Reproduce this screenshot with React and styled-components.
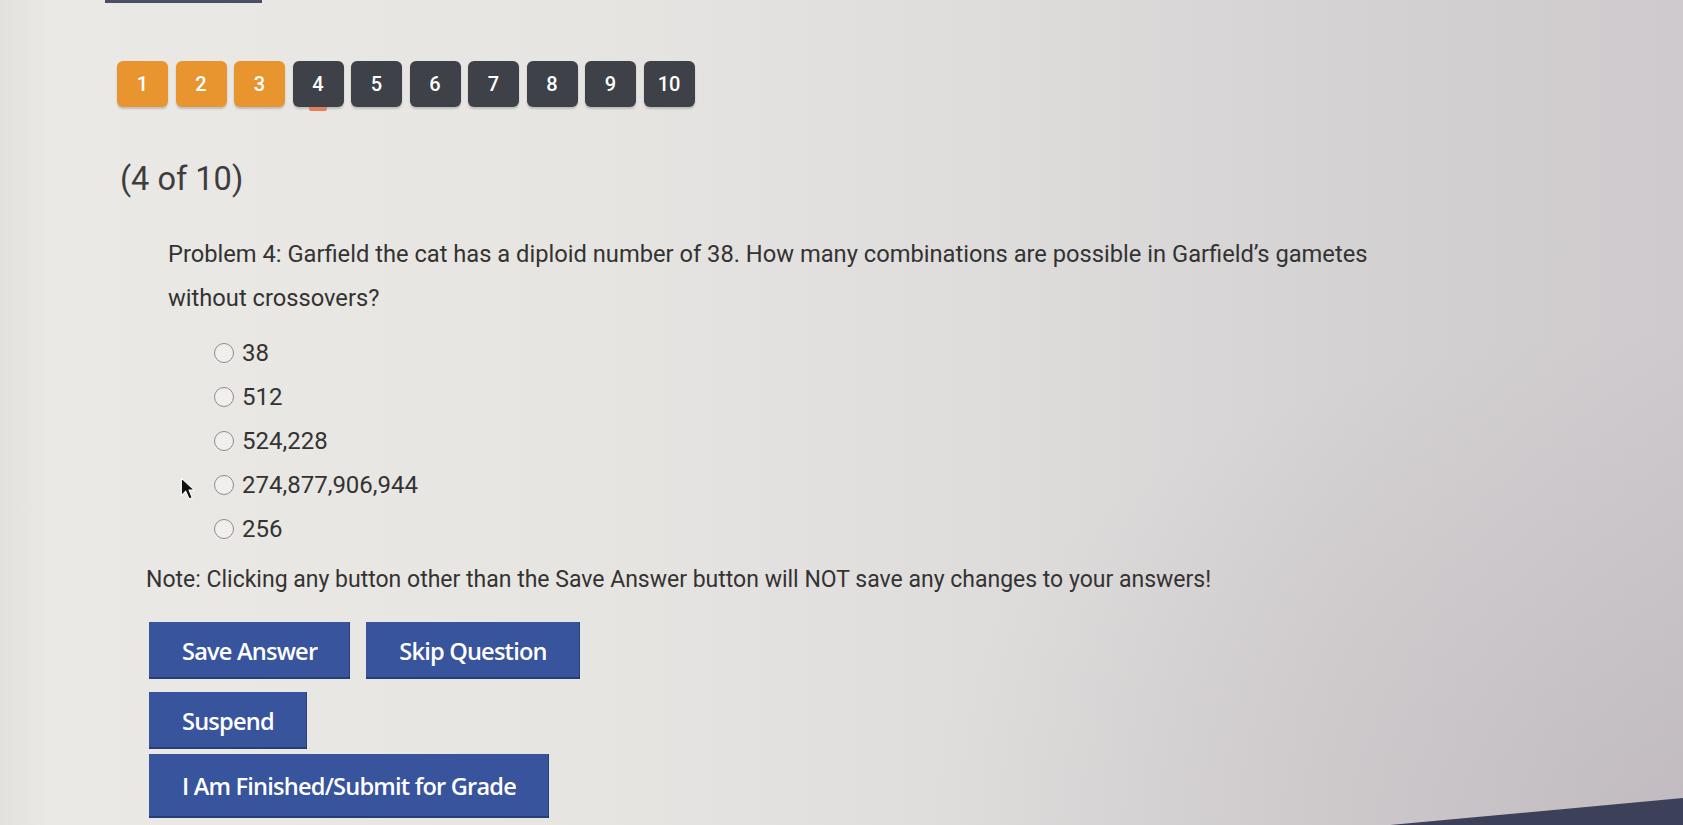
import React from "react";
import styled, { createGlobalStyle } from "styled-components";

const Global = createGlobalStyle`
  html, body { margin: 0; padding: 0; }
  body { font-family: Roboto, "Liberation Sans", Arial, sans-serif; }
`;

const Page = styled.div`
  position: relative;
  width: 100vw;
  height: 825px;
  overflow: hidden;
  box-sizing: border-box;
  background:
    radial-gradient(ellipse 45% 60% at 100% 100%, rgba(170, 160, 168, 0.35), rgba(170, 160, 168, 0) 100%),
    linear-gradient(90deg, #e3e1de 0%, #ebe9e5 3%, #e7e5e2 35%, #dfdddc 58%, #d5d2d3 80%, #cecacd 100%);
  color: #373737;
`;

const TopRule = styled.div`
  margin-left: 105px;
  width: 157px;
  height: 3px;
  background: #4a4f62;
`;

const Nav = styled.nav`
  display: flex;
  gap: 7.5px;
  margin: 58px 0 0 117px;
`;

const NavBox = styled.div`
  position: relative;
  width: 51px;
  height: 46px;
  border-radius: 6px;
  display: flex;
  align-items: center;
  justify-content: center;
  font-family: Roboto, "Liberation Sans", Arial, sans-serif;
  font-weight: 500;
  font-size: 20px;
  color: #ffffff;
  background: ${(p) => (p.$done ? "#e8952f" : "#3e4248")};
  box-shadow: 0 2px 2px rgba(0, 0, 0, 0.18);

  ${(p) =>
    p.$current &&
    `
    &::after {
      content: "";
      position: absolute;
      left: 50%;
      bottom: -4px;
      width: 18px;
      height: 4px;
      transform: translateX(-50%);
      background: #e2805c;
      border-radius: 0 0 2px 2px;
    }
  `}
`;

const Counter = styled.div`
  margin: 53px 0 0 120px;
  font-size: 32.5px;
  line-height: 38px;
  color: #3d3d3d;
`;

const Question = styled.p`
  margin: 34px 0 0 168px;
  font-size: 23.7px;
  line-height: 44px;
  color: #333333;
`;

const Options = styled.div`
  margin: 11px 0 0 214px;
  display: flex;
  flex-direction: column;
`;

const Option = styled.label`
  display: flex;
  align-items: center;
  gap: 8px;
  height: 44px;
  font-size: 24px;
  color: #333333;
`;

const Radio = styled.span`
  width: 18px;
  height: 18px;
  border-radius: 50%;
  border: 1.6px solid #8c8c8c;
  background: #f0efed;
  flex-shrink: 0;
`;

const Note = styled.p`
  margin: 7px 0 0 146px;
  font-size: 23px;
  line-height: 44px;
  color: #333333;
`;

const Actions = styled.div`
  margin: 20px 0 0 149px;
  display: flex;
  flex-direction: column;
`;

const ActionRow = styled.div`
  display: flex;
  gap: 16px;
  margin-top: ${(p) => p.$space || 0}px;
`;

const Button = styled.button`
  height: ${(p) => (p.$tall ? "64px" : "57px")};
  padding: 0 33px;
  border: none;
  background: #38549c;
  box-shadow: inset 0 -2px 0 rgba(10, 20, 50, 0.35), inset -1px 0 0 rgba(10, 20, 50, 0.3);
  color: #ffffff;
  font-family: "Open Sans", "Noto Sans", sans-serif;
  font-weight: 600;
  font-size: 23.6px;
  letter-spacing: -0.8px;
  cursor: pointer;
`;

const Cursor = styled.svg`
  position: absolute;
  left: 180px;
  top: 477px;
  width: 18px;
  height: 24px;
`;

const Bezel = styled.div`
  position: absolute;
  left: 1390px;
  right: 0;
  bottom: 0;
  height: 27px;
  background: #3c4058;
  clip-path: polygon(0 100%, 100% 0, 100% 100%);
`;

const nums = [1, 2, 3, 4, 5, 6, 7, 8, 9, 10];
const answers = ["38", "512", "524,228", "274,877,906,944", "256"];

export default function App() {
  return (
    <>
      <Global />
      <Page>
        <TopRule />
        <Nav>
          {nums.map((n) => (
            <NavBox key={n} $done={n < 4} $current={n === 4}>
              {n}
            </NavBox>
          ))}
        </Nav>
        <Counter>(4 of 10)</Counter>
        <Question>
          Problem 4: Garfield the cat has a diploid number of 38. How many combinations are possible in Garfield’s gametes
          <br />
          without crossovers?
        </Question>
        <Options>
          {answers.map((a) => (
            <Option key={a}>
              <Radio />
              {a}
            </Option>
          ))}
        </Options>
        <Note>Note: Clicking any button other than the Save Answer button will NOT save any changes to your answers!</Note>
        <Actions>
          <ActionRow>
            <Button>Save Answer</Button>
            <Button>Skip Question</Button>
          </ActionRow>
          <ActionRow $space={13}>
            <Button>Suspend</Button>
          </ActionRow>
          <ActionRow $space={5}>
            <Button $tall>I Am Finished/Submit for Grade</Button>
          </ActionRow>
        </Actions>
        <Cursor viewBox="0 0 16 22">
          <path d="M1 1 L1 17 L5 13 L8 20 L11 19 L8 12 L13 12 Z" fill="#111" stroke="#fff" strokeWidth="1" strokeLinejoin="round" />
        </Cursor>
        <Bezel />
      </Page>
    </>
  );
}
